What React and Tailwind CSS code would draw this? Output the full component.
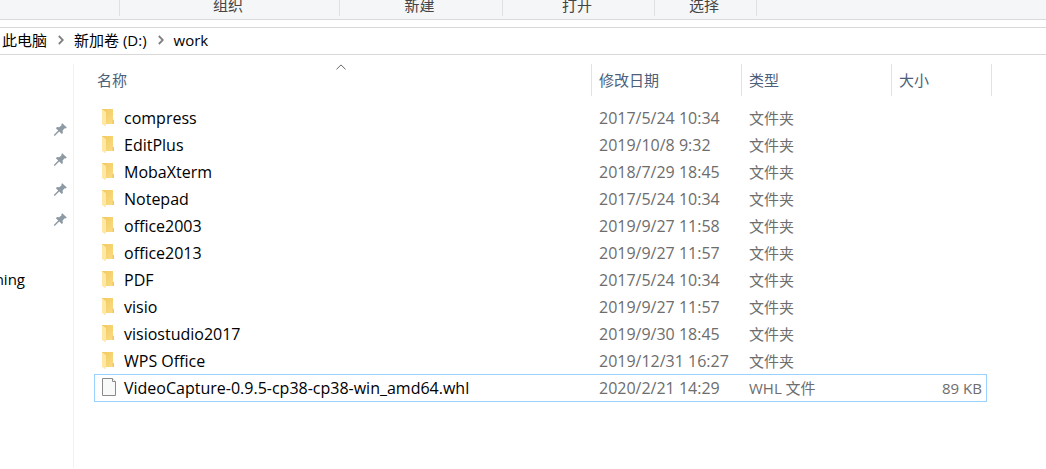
import { useState } from 'react';
import clsx from 'clsx';

const ribbonGroups = [
  { label: '', width: 'w-[120px]' },
  { label: '组织', width: 'w-[220px]' },
  { label: '新建', width: 'w-[163px]' },
  { label: '打开', width: 'w-[152px]' },
  { label: '选择', width: 'w-[102px]' },
];

const crumbs = ['此电脑', '新加卷 (D:)', 'work'];

const files = [
  { name: 'compress', date: '2017/5/24 10:34', type: '文件夹' },
  { name: 'EditPlus', date: '2019/10/8 9:32', type: '文件夹' },
  { name: 'MobaXterm', date: '2018/7/29 18:45', type: '文件夹' },
  { name: 'Notepad', date: '2017/5/24 10:34', type: '文件夹' },
  { name: 'office2003', date: '2019/9/27 11:58', type: '文件夹' },
  { name: 'office2013', date: '2019/9/27 11:57', type: '文件夹' },
  { name: 'PDF', date: '2017/5/24 10:34', type: '文件夹' },
  { name: 'visio', date: '2019/9/27 11:57', type: '文件夹' },
  { name: 'visiostudio2017', date: '2019/9/30 18:45', type: '文件夹' },
  { name: 'WPS Office', date: '2019/12/31 16:27', type: '文件夹' },
  { name: 'VideoCapture-0.9.5-cp38-cp38-win_amd64.whl', date: '2020/2/21 14:29', type: 'WHL 文件', size: '89 KB' },
];

const FolderIcon = () => (
  <svg width="16" height="18" viewBox="0 0 16 18" className="shrink-0" aria-hidden="true">
    <defs>
      <linearGradient id="folder-back" x1="0" y1="0" x2="1" y2="1">
        <stop offset="0" stopColor="#f1c95f" />
        <stop offset="1" stopColor="#fbdd85" />
      </linearGradient>
    </defs>
    <path d="M1 0H12V10.500L13 11.500V15H4L1 14Z" fill="url(#folder-back)" />
    <path d="M12 10.500L13 11.500V15H11.500V11.500Z" fill="#efc765" />
    <path d="M1 .3L4.500 2.700Q5 3.100 5 4V15.500L4.300 17.200L1 15Z" fill="#ffe8a6" />
  </svg>
);

const FileIcon = () => (
  <svg width="16" height="20" viewBox="0 0 16 20" className="shrink-0" aria-hidden="true">
    <path d="M1.500 .5H11.500L14.500 3.500V17.500H1.500Z" fill="#f8f9f9" stroke="#8a8a8a" />
    <path d="M11.500 .5V3.500H14.500" fill="#fff" stroke="#8a8a8a" />
  </svg>
);

const PinIcon = () => (
  <svg width="13" height="13" viewBox="0 0 13 13" fill="#8e9aa3" aria-hidden="true">
    <path d="M8.200 .2L12.800 4.600L11.600 5.500L10.700 5.300L8.600 7.600L8.900 9.900L7.800 11L5.200 8.500L1 12.700H0V11.700L4.200 7.500L1.900 5.200L3 4.100L5.200 4.300L7.600 2.300L7.400 1.100Z" />
  </svg>
);

const CrumbArrow = () => (
  <svg width="6" height="10" viewBox="0 0 6 10" fill="none" stroke="#808080" strokeWidth="1.8" className="mr-[10px] ml-[11px]" aria-hidden="true">
    <path d="M.8 1L4.800 5L.8 9" />
  </svg>
);

const HeaderCell = ({ label, ...props }) => (
  <th className="h-8 border-r border-[#e2e2e2] p-0 text-left font-normal" {...props}>
    <button type="button" className="block h-8 w-full pl-[7px] text-left">{label}</button>
  </th>
);

const App = () => {
  const [selected, setSelected] = useState(files.length - 1);

  return (
    <div className="min-h-screen overflow-hidden bg-white font-['Open_Sans','Noto_Sans_CJK_SC',sans-serif] text-[15px] leading-[22px] text-black">
      {/* Ribbon group captions */}
      <div className="flex h-5 border-b border-[#d9dadc] bg-[#f5f6f7] text-[#444444]">
        {ribbonGroups.map((group) => (
          <div key={group.label} className={clsx('flex h-4 shrink-0 items-end justify-center border-r border-[#dfe0e2] pr-[3px]', group.width)}>
            {group.label}
          </div>
        ))}
      </div>

      {/* Address bar */}
      <nav className="mt-[7px] flex h-7 items-center border-y border-[#d9d9d9] pb-0.5 pl-0.5">
        {crumbs.map((crumb, i) => (
          <div key={crumb} className="flex items-center">
            {i > 0 && <CrumbArrow />}
            <button type="button" className="whitespace-nowrap">{crumb}</button>
          </div>
        ))}
      </nav>

      <div className="flex pt-[9px]">
        {/* Quick access */}
        <aside className="h-[404px] w-[74px] shrink-0 overflow-hidden border-r border-[#f2f2f2] pt-[50px]">
          <ul>
            {[1, 2, 3, 4].map((n) => (
              <li key={n} className="flex h-[30px] items-center justify-end pr-[6px]"><PinIcon /></li>
            ))}
            <li className="mt-[30px] flex h-[30px] w-[25px] items-center justify-end overflow-hidden">ning</li>
          </ul>
        </aside>

        <main className="min-w-0 flex-1 pr-[54px] pl-5">
          <table className="w-full table-fixed border-separate border-spacing-0">
            <colgroup>
              <col />
              <col className="w-[150px]" />
              <col className="w-[150px]" />
              <col className="w-[95px]" />
              <col className="w-[5px]" />
            </colgroup>
            <thead className="text-[#4c607a]">
              <tr>
                <th className="relative h-8 border-r border-[#e2e2e2] p-0 text-left font-normal" aria-sort="ascending">
                  <button type="button" className="block h-8 w-full pl-[3px] text-left">名称</button>
                  <svg width="12" height="6" viewBox="0 0 12 6" fill="none" stroke="#666" className="absolute top-0 left-1/2 -translate-x-1/2" aria-hidden="true">
                    <path d="M.5 5.300L5 .9L9.500 5.300" />
                  </svg>
                </th>
                <HeaderCell label="修改日期" />
                <HeaderCell label="类型" />
                <HeaderCell label="大小" colSpan={2} />
              </tr>
              <tr aria-hidden="true"><td className="h-2 p-0" /></tr>
            </thead>
            <tbody>
              {files.map((file, i) => {
                const edge = i === selected ? 'border-[#99d1ff]' : 'border-transparent';
                return (
                  <tr key={file.name} onClick={() => setSelected(i)} className="whitespace-nowrap text-[#6d6d6d]">
                    <td className={clsx('border-y border-l p-0 text-black', i === selected ? 'h-7' : 'h-[27px]', edge)}>
                      <div className="flex items-center gap-[7px] pl-[6px] text-base leading-[22px]">
                        {file.size ? <FileIcon /> : <FolderIcon />}
                        {file.name}
                      </div>
                    </td>
                    <td className={clsx('border-y p-0 pl-[7px] text-base leading-[22px]', edge)}>{file.date}</td>
                    <td className={clsx('border-y p-0 pl-[7px]', edge)}>{file.type}</td>
                    <td className={clsx('border-y border-r p-0 pr-1 text-right', edge)}>{file.size}</td>
                  </tr>
                );
              })}
            </tbody>
          </table>
        </main>
      </div>
    </div>
  );
};

export default App;
